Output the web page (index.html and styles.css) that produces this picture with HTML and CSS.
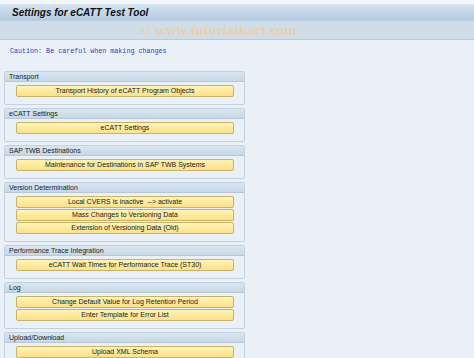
FILE: index.html
```html
<!DOCTYPE html>
<html lang="en">

<head>
  <meta charset="UTF-8">
  <title>Settings for eCATT Test Tool</title>
  <link rel="stylesheet" href="styles.css">
</head>

<body>
  <div class="topline"></div>
  <div class="titlebar">Settings for eCATT Test Tool</div>
  <div class="toolbar"><span class="watermark">&copy; www.tutorialkart.com</span></div>

  <div class="content">
    <div class="caution">Caution: Be careful when making changes</div>

    <div class="group">
      <div class="group-title">Transport</div>
      <div class="buttons">
        <div class="btn">Transport History of eCATT Program Objects</div>
      </div>
    </div>

    <div class="group">
      <div class="group-title">eCATT Settings</div>
      <div class="buttons">
        <div class="btn">eCATT Settings</div>
      </div>
    </div>

    <div class="group">
      <div class="group-title">SAP TWB Destinations</div>
      <div class="buttons">
        <div class="btn">Maintenance for Destinations in SAP TWB Systems</div>
      </div>
    </div>

    <div class="group">
      <div class="group-title">Version Determination</div>
      <div class="buttons">
        <div class="btn">Local CVERS is inactive &nbsp;--&gt; activate</div>
        <div class="btn">Mass Changes to Versioning Data</div>
        <div class="btn">Extension of Versioning Data (Old)</div>
      </div>
    </div>

    <div class="group">
      <div class="group-title">Performance Trace Integration</div>
      <div class="buttons">
        <div class="btn">eCATT Wait Times for Performance Trace (ST30)</div>
      </div>
    </div>

    <div class="group">
      <div class="group-title">Log</div>
      <div class="buttons">
        <div class="btn">Change Default Value for Log Retention Period</div>
        <div class="btn">Enter Template for Error List</div>
      </div>
    </div>

    <div class="group">
      <div class="group-title">Upload/Download</div>
      <div class="buttons">
        <div class="btn">Upload XML Schema</div>
      </div>
    </div>
  </div>
</body>

</html>
```

FILE: styles.css
```css
body {
  margin: 0;
  background-color: #eaf0f7;
  font-family: "Liberation Sans", Arial, sans-serif;
  color: #222;
  overflow: hidden;
}

.topline {
  height: 4px;
  background-color: #f3f6fa;
}

.titlebar {
  height: 17px;
  line-height: 17px;
  padding-left: 12px;
  font-size: 10px;
  font-weight: bold;
  font-style: italic;
  color: #111;
  background: linear-gradient(#d6e3f0, #b3c9e0);
}

.toolbar {
  height: 18px;
  line-height: 18px;
  padding-left: 140px;
  background-color: #cfdde9;
  border-bottom: 1px solid #b9c9d8;
}

.watermark {
  font-family: "Liberation Serif", serif;
  font-size: 15px;
  font-weight: bold;
  color: #e9cfb0;
}

.content {
  display: flex;
  flex-direction: column;
  padding: 6px 0 0 4px;
}

.caution {
  font-family: "Liberation Mono", monospace;
  font-size: 6.7px;
  line-height: 10px;
  color: #2f3fc4;
  padding-left: 6px;
  margin-bottom: 15px;
}

.group {
  width: 239px;
  border: 1px solid #c3d0dd;
  border-radius: 2px;
  margin-bottom: 3px;
}

.group-title {
  height: 9px;
  line-height: 9px;
  padding-left: 4px;
  font-size: 7px;
  background: linear-gradient(#d9e5f1, #c8d7e6);
  border-bottom: 1px solid #b8c7d6;
}

.buttons {
  display: flex;
  flex-direction: column;
  gap: 1px;
  padding: 3px 10px 7px 11px;
}

.btn {
  height: 10px;
  line-height: 10px;
  text-align: center;
  font-size: 7px;
  color: #1a1a1a;
  background: linear-gradient(#fff3b5, #fbe18a);
  border: 1px solid #c9b26a;
  border-radius: 2px;
}
```
